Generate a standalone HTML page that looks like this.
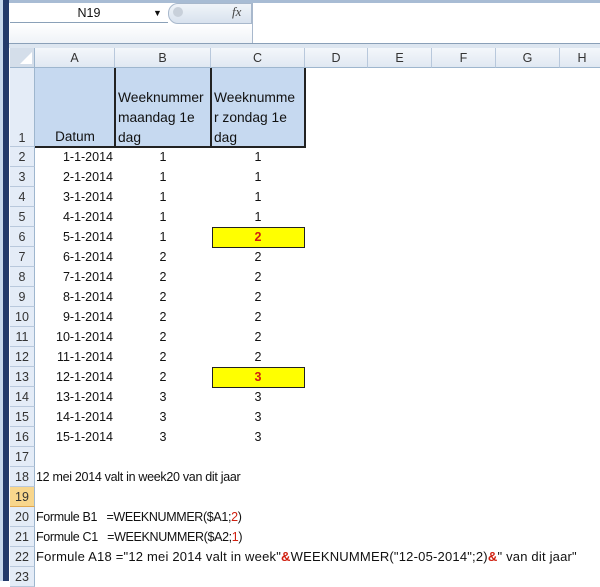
<!DOCTYPE html>
<html><head><style>
body{margin:0;width:600px;height:581px;overflow:hidden;background:#fff;font-family:"Liberation Sans",sans-serif;font-size:12.5px;color:#111;position:relative}
div{position:absolute;box-sizing:border-box}
.rh{left:10px;width:25px;height:20px;background:#e4ecf7;border-bottom:1px solid #b8c8dc;border-right:1px solid #9eb6ce;text-align:center;line-height:20px;color:#333}
.ch{top:48px;height:20px;background:linear-gradient(#f4f7fb,#e0e8f2);border-right:1px solid #b8c8dc;border-bottom:1px solid #9eb6ce;text-align:center;line-height:20px;color:#333}
.c{height:20px;line-height:20px}
.a{left:35px;width:80px;text-align:right;padding-right:2px}
.b{left:115px;width:96px;text-align:center}
.cc{left:211px;width:94px;text-align:center}
.t{left:36px;white-space:nowrap}
.r{color:#d02010}
</style></head><body>
<div style="left:0;top:0;width:3px;height:581px;background:#c8d8ec"></div>
<div style="left:3px;top:0;width:6px;height:581px;background:#243a6a"></div>
<div style="left:9px;top:0;width:591px;height:3px;background:#a8bcd4"></div>
<div style="left:10px;top:3px;width:158px;height:20px;background:#fff;border-bottom:1px solid #8aa0b8;text-align:center;line-height:20px">N19</div>
<div style="left:153px;top:8px;font-size:9px">▼</div>
<div style="left:168px;top:3px;width:84px;height:21px;background:linear-gradient(#f0f4f9,#d8e2ee);border:1px solid #a8b8cc;border-radius:10px 0 0 10px"></div>
<div style="left:173px;top:7px;width:10px;height:10px;border-radius:5px;background:#c8d0da"></div>
<div style="left:232px;top:4px;font-family:'Liberation Serif',serif;font-style:italic;font-size:13px;color:#444">fx</div>
<div style="left:252px;top:3px;width:348px;height:41px;background:#fff;border-left:1px solid #a8b8cc"></div>
<div style="left:10px;top:24px;width:242px;height:20px;background:linear-gradient(#fff,#eef2f7)"></div>
<div style="left:9px;top:43px;width:591px;height:5px;background:#dde6f0;border-top:1px solid #8aa0b8"></div>
<div style="left:10px;top:48px;width:25px;height:20px;background:#d4deea;border-right:1px solid #9eb6ce;border-bottom:1px solid #9eb6ce"></div>
<div style="left:20px;top:52px;width:0;height:0;border-left:12px solid transparent;border-bottom:12px solid #fff"></div>
<div class="ch" style="left:35px;width:80px">A</div>
<div class="ch" style="left:115px;width:96px">B</div>
<div class="ch" style="left:211px;width:94px">C</div>
<div class="ch" style="left:305px;width:63px">D</div>
<div class="ch" style="left:368px;width:64px">E</div>
<div class="ch" style="left:432px;width:64px">F</div>
<div class="ch" style="left:496px;width:64px">G</div>
<div class="ch" style="left:560px;width:45px">H</div>
<div style="left:35px;top:68px;width:270px;height:79px;background:#c6d9f0"></div>
<div style="left:114px;top:68px;width:2px;height:79px;background:#222"></div>
<div style="left:210px;top:68px;width:2px;height:79px;background:#222"></div>
<div style="left:304px;top:68px;width:2px;height:80px;background:#222"></div>
<div style="left:35px;top:146px;width:271px;height:2px;background:#222"></div>
<div class="rh" style="top:68px;height:79px;line-height:20px;padding-top:60px">1</div>
<div style="left:35px;top:127px;width:80px;text-align:center;line-height:20px;font-size:13.5px">Datum</div>
<div style="left:118px;top:88px;line-height:20px;font-size:13.8px">Weeknummer<br>maandag 1e<br>dag</div>
<div style="left:214px;top:88px;line-height:20px;font-size:13.8px">Weeknumme<br>r zondag 1e<br>dag</div>
<div style="left:212px;top:227px;width:93px;height:21px;background:#ffff00;border:1px solid #222"></div>
<div style="left:212px;top:367px;width:93px;height:21px;background:#ffff00;border:1px solid #222"></div>
<div class="rh" style="top:147px">2</div><div class="c a" style="top:147px">1-1-2014</div><div class="c b" style="top:147px">1</div><div class="c cc" style="top:147px">1</div>
<div class="rh" style="top:167px">3</div><div class="c a" style="top:167px">2-1-2014</div><div class="c b" style="top:167px">1</div><div class="c cc" style="top:167px">1</div>
<div class="rh" style="top:187px">4</div><div class="c a" style="top:187px">3-1-2014</div><div class="c b" style="top:187px">1</div><div class="c cc" style="top:187px">1</div>
<div class="rh" style="top:207px">5</div><div class="c a" style="top:207px">4-1-2014</div><div class="c b" style="top:207px">1</div><div class="c cc" style="top:207px">1</div>
<div class="rh" style="top:227px">6</div><div class="c a" style="top:227px">5-1-2014</div><div class="c b" style="top:227px">1</div><div class="c cc r" style="top:227px;font-weight:bold">2</div>
<div class="rh" style="top:247px">7</div><div class="c a" style="top:247px">6-1-2014</div><div class="c b" style="top:247px">2</div><div class="c cc" style="top:247px">2</div>
<div class="rh" style="top:267px">8</div><div class="c a" style="top:267px">7-1-2014</div><div class="c b" style="top:267px">2</div><div class="c cc" style="top:267px">2</div>
<div class="rh" style="top:287px">9</div><div class="c a" style="top:287px">8-1-2014</div><div class="c b" style="top:287px">2</div><div class="c cc" style="top:287px">2</div>
<div class="rh" style="top:307px">10</div><div class="c a" style="top:307px">9-1-2014</div><div class="c b" style="top:307px">2</div><div class="c cc" style="top:307px">2</div>
<div class="rh" style="top:327px">11</div><div class="c a" style="top:327px">10-1-2014</div><div class="c b" style="top:327px">2</div><div class="c cc" style="top:327px">2</div>
<div class="rh" style="top:347px">12</div><div class="c a" style="top:347px">11-1-2014</div><div class="c b" style="top:347px">2</div><div class="c cc" style="top:347px">2</div>
<div class="rh" style="top:367px">13</div><div class="c a" style="top:367px">12-1-2014</div><div class="c b" style="top:367px">2</div><div class="c cc r" style="top:367px;font-weight:bold">3</div>
<div class="rh" style="top:387px">14</div><div class="c a" style="top:387px">13-1-2014</div><div class="c b" style="top:387px">3</div><div class="c cc" style="top:387px">3</div>
<div class="rh" style="top:407px">15</div><div class="c a" style="top:407px">14-1-2014</div><div class="c b" style="top:407px">3</div><div class="c cc" style="top:407px">3</div>
<div class="rh" style="top:427px">16</div><div class="c a" style="top:427px">15-1-2014</div><div class="c b" style="top:427px">3</div><div class="c cc" style="top:427px">3</div>
<div class="rh" style="top:447px">17</div>
<div class="rh" style="top:467px">18</div><div class="c t" style="top:467px;letter-spacing:-0.3px">12 mei 2014 valt in week20 van dit jaar</div>
<div class="rh" style="top:487px;background:#f8d68c;border-bottom:1px solid #e0a850">19</div>
<div class="rh" style="top:507px">20</div><div class="c t" style="top:507px;letter-spacing:-0.35px">Formule B1&nbsp;&nbsp;&nbsp;=WEEKNUMMER($A1;<span class="r">2</span>)</div>
<div class="rh" style="top:527px">21</div><div class="c t" style="top:527px;letter-spacing:-0.35px">Formule C1&nbsp;&nbsp;&nbsp;=WEEKNUMMER($A2;<span class="r">1</span>)</div>
<div class="rh" style="top:547px">22</div><div class="c t" style="top:547px;font-size:13px;letter-spacing:0.2px">Formule A18 ="12 mei 2014 valt in week"<span class="r"><b>&amp;</b></span>WEEKNUMMER("12-05-2014";2)<span class="r"><b>&amp;</b></span>" van dit jaar"</div>
<div class="rh" style="top:567px">23</div>
</body></html>
